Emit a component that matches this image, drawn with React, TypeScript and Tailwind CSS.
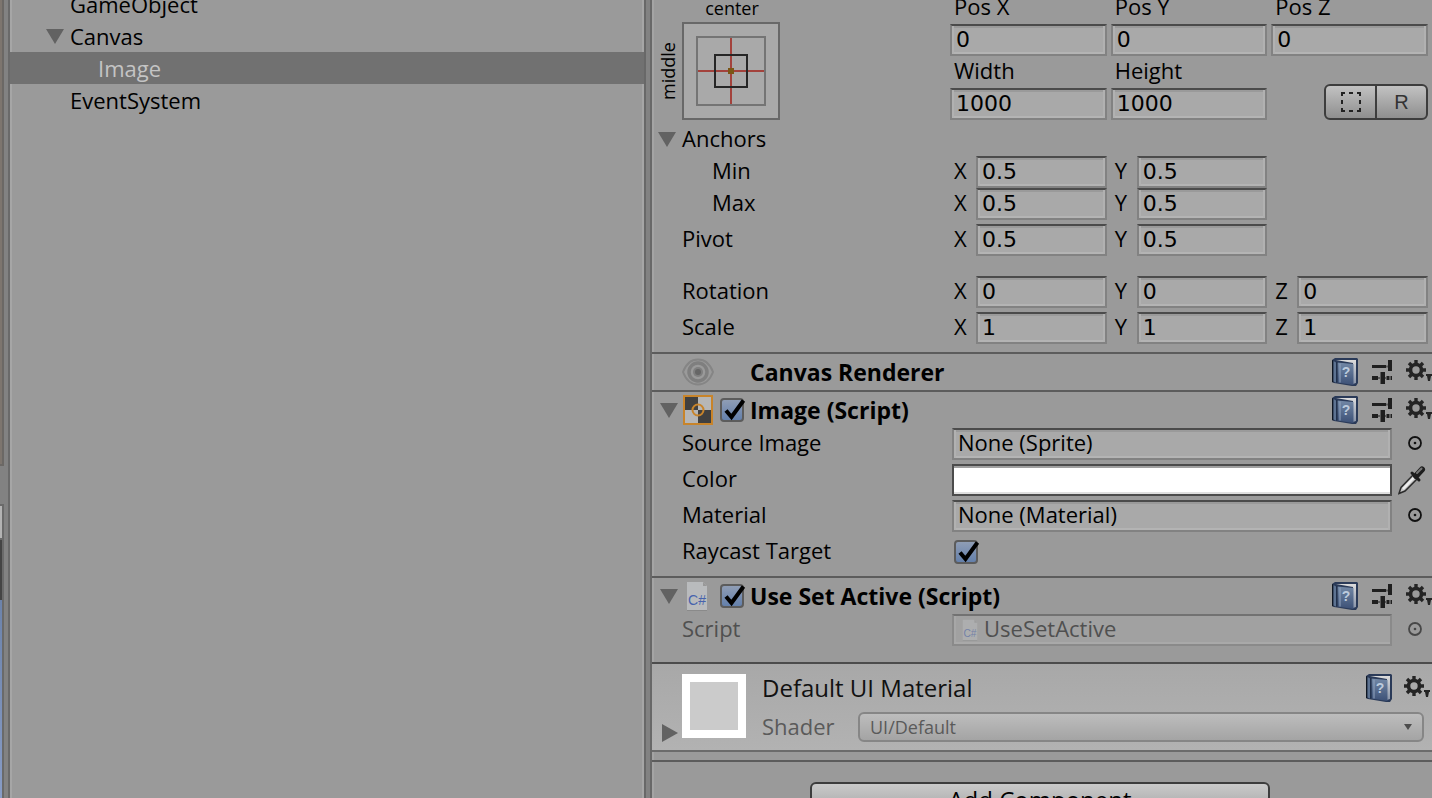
import React, { useState } from 'react';

const fieldStyle =
  'border-2 border-[#828282] border-t-[#4b4b4b] bg-[#a9a9a9] shadow-[inset_2px_0_0_#b1b1b1,inset_-2px_0_0_#b1b1b1,inset_0_2px_0_#9a9a9a,inset_0_-2px_0_#b4b4b4]';

const hierarchy = [
  { name: 'Canvas', depth: 0, open: true },
  { name: 'Image', depth: 1, selected: true },
  { name: 'EventSystem', depth: 0 },
];

const Foldout: React.FC<{ label: string; open?: boolean }> = ({ label, open = true }) => (
  <button type="button" aria-label={label} aria-expanded={open} className="block">
    <svg width="18" height="18" viewBox="0 0 18 18" fill="#626262">
      {open ? <path d="M0 2h18L9 17z" /> : <path d="M2 0v18l16-9z" />}
    </svg>
  </button>
);

const BookIcon: React.FC = () => (
  <svg width="26" height="28" viewBox="0 0 26 28">
    <defs>
      <linearGradient id="cover" x1="0" y1="0" x2="0" y2="1">
        <stop offset="0" stopColor="#7288a6" />
        <stop offset="1" stopColor="#3c5076" />
      </linearGradient>
      <linearGradient id="pages" x1="0" y1="0" x2="0" y2="1">
        <stop offset="0" stopColor="#dcdcdc" />
        <stop offset="1" stopColor="#8793a8" />
      </linearGradient>
    </defs>
    <path d="M0 2L3 0h22l1 1v24l-2 3h-4L2 25 0 24z" fill="#2a3a58" />
    <path d="M4 2h20v23l-3 1V5z" fill="url(#pages)" />
    <path d="M0 2l1.500 1v21.500L0 24z" fill="#0e1622" />
    <path d="M1.500 3L4 4.500v20l-2.500-1z" fill="#5d7392" />
    <path d="M5 4.500l16.500 1.500V27L5 24.500z" fill="url(#cover)" />
    <path d="M8 5.500V24.500" stroke="#93a6c0" strokeWidth="1" />
    <path d="M5 4V24.500" stroke="#1f2c45" strokeWidth="1.200" />
    <text x="14" y="19" textAnchor="middle" fontSize="14" fontWeight="bold" fontFamily="Liberation Sans, sans-serif" fill="#bccbdd">
      ?
    </text>
  </svg>
);

const PresetIcon: React.FC = () => (
  <svg width="20" height="28" viewBox="0 0 20 28" fill="#1f1f1f">
    <path d="M0 7h14v3H0zM16 2h4v11h-4zM0 18h6v4H0zM8.500 14H13v12H8.500zM14.500 18h3v4h-3zM18.500 18H20v4h-1.500z" />
    <path d="M14 7.500h2v2h-2zM6 19h2.500v2H6zM13 19h1.500v2H13z" fill="#5b5b5b" />
  </svg>
);

const GearIcon: React.FC = () => (
  <svg width="26" height="28" viewBox="0 0 26 28">
    <g stroke="#242424" fill="none">
      <circle cx="10" cy="12" r="5.500" strokeWidth="3.600" />
      <path
        d="M10 2v4M10 18v4M0 12h4M16 12h4M3 5l3 3M14 16l3 3M17 5l-3 3M6 16l-3 3"
        strokeWidth="3.400"
      />
    </g>
    <path d="M20 16h6v2h-1l-1 5h-2l-1-5h-1z" fill="#242424" />
  </svg>
);

const EyeIcon: React.FC = () => (
  <svg width="32" height="28" viewBox="0 0 32 28" fill="none">
    <path d="M1 14C4 6 9 1.500 16 1.500S28 6 31 14C28 22 23 26.500 16 26.500S4 22 1 14z" stroke="#858585" strokeWidth="2" />
    <circle cx="16" cy="14" r="9" stroke="#7f7f7f" strokeWidth="3.500" />
    <circle cx="16" cy="14" r="5" fill="#7f7f7f" />
    <circle cx="16" cy="14" r="3" fill="#666" />
  </svg>
);

const ImageIcon: React.FC = () => (
  <svg width="32" height="32" viewBox="0 0 32 32">
    <rect x="2" y="2" width="28" height="28" fill="#b6b6b6" />
    <path d="M3 3h13v13H3zM16 16h13v13H16z" fill="#404040" />
    <rect x="2" y="2" width="28" height="28" fill="none" stroke="#c8842a" strokeWidth="2" />
    <circle cx="16" cy="16" r="5.500" fill="none" stroke="#c8842a" strokeWidth="2" />
  </svg>
);

const ScriptIcon: React.FC<{ className?: string }> = ({ className }) => (
  <svg viewBox="0 0 22 30" className={className}>
    <path d="M1 1h16l4 4v24H1z" fill="#b9bbbd" />
    <path d="M1 29.500h20" stroke="#8a8a8a" />
    <path d="M17 1v4h4z" fill="#989898" />
    <text x="11" y="24" textAnchor="middle" fontSize="14" fontFamily="Liberation Sans, sans-serif" fill="#4763ad">
      C#
    </text>
  </svg>
);

const DropperIcon: React.FC = () => (
  <svg width="28" height="30" viewBox="0 0 28 30">
    <path d="M1 28.500l2-6L15 10l4 4L7 26z" fill="#c6c6c6" stroke="#2b2b2b" strokeWidth="1.500" />
    <path d="M5 24L16 12.500" stroke="#efefef" strokeWidth="2" />
    <path d="M14 8l7 7" stroke="#1d1d1d" strokeWidth="3" strokeLinecap="round" />
    <path d="M18 11l6-6.500" stroke="#1d1d1d" strokeWidth="6" strokeLinecap="round" />
    <path d="M19 8l4.500-4.500" stroke="#777" strokeWidth="2" strokeLinecap="round" />
  </svg>
);

const PickerButton: React.FC<{ label: string; disabled?: boolean }> = ({ label, disabled }) => (
  <button type="button" aria-label={label} disabled={disabled} className="flex h-[30px] items-center justify-end pr-2.5 disabled:opacity-60">
    <svg width="14" height="14" viewBox="0 0 14 14">
      <circle cx="7" cy="7" r="6" fill="none" stroke="#111" strokeWidth="1.800" />
      <circle cx="7" cy="7" r="1.300" fill="#111" />
    </svg>
  </button>
);

const Checkbox: React.FC<{ id?: string; label?: string }> = ({ id, label }) => (
  <span className="relative block size-6">
    <input
      id={id}
      type="checkbox"
      defaultChecked
      aria-label={label}
      className="peer block size-6 appearance-none rounded border-2 border-[#5c5c5c] bg-linear-to-b from-[#8f9db5] to-[#6480ab]"
    />
    <svg viewBox="0 0 26 24" className="pointer-events-none absolute top-0 left-0 hidden h-6 w-[26px] peer-checked:block">
      <path d="M6 12.500l5.500 6.500L23.500 2.500" fill="none" stroke="#000" strokeWidth="4" />
    </svg>
  </span>
);

const ComponentHeader: React.FC<{
  title: string;
  icon: React.ReactNode;
  toggle?: boolean;
}> = ({ title, icon, toggle = true }) => (
  <header className="flex h-9 items-center pl-2">
    <div className="w-[22px]">{toggle && <Foldout label={`Toggle ${title}`} />}</div>
    <div className="w-[38px]">{icon}</div>
    <div className="w-[30px]">{toggle && <Checkbox label={`Enable ${title}`} />}</div>
    <h2 className="flex-1 text-[23px] leading-7 font-bold">{title}</h2>
    <div className="flex gap-3.5">
      <button type="button" aria-label="Open reference"><BookIcon /></button>
      <button type="button" aria-label="Presets"><PresetIcon /></button>
      <button type="button" aria-label="Component menu"><GearIcon /></button>
    </div>
  </header>
);

const TextField: React.FC<{ id: string; value: string }> = ({ id, value }) => {
  const [text, setText] = useState(value);
  return (
    <input
      id={id}
      type="text"
      value={text}
      onChange={e => setText(e.target.value)}
      className={`block h-8 w-full min-w-0 rounded-none pb-0.5 pl-1 font-['DejaVu_Sans',sans-serif] outline-none ${fieldStyle}`}
    />
  );
};

const StackedField: React.FC<{ label: string; value: string; clipped?: boolean }> = ({ label, value, clipped }) => {
  const id = label.toLowerCase().replace(' ', '-');
  return (
    <div>
      <div className={`flex overflow-hidden pb-1 pl-1 ${clipped ? 'h-6 items-end' : 'h-8'}`}>
        <label htmlFor={id} className="leading-7">{label}</label>
      </div>
      <TextField id={id} value={value} />
    </div>
  );
};

const VectorRow: React.FC<{ label: string; values: string[]; indent?: boolean }> = ({ label, values, indent }) => (
  <div className="grid grid-cols-[298px_1fr] pr-1">
    <span className={`leading-7 ${indent ? 'pl-[60px]' : 'pl-[30px]'}`}>{label}</span>
    <div className="grid grid-cols-3 gap-1">
      {values.map((value, i) => {
        const axis = ['X', 'Y', 'Z'][i];
        const id = `${label.toLowerCase()}-${axis}`;
        return (
          <div key={axis} className="flex">
            <label htmlFor={id} className="w-[26px] shrink-0 pl-1 leading-7">{axis}</label>
            <TextField id={id} value={value} />
          </div>
        );
      })}
    </div>
  </div>
);

const PropertyRow: React.FC<{
  label: string;
  htmlFor: string;
  disabled?: boolean;
  children: React.ReactNode;
}> = ({ label, htmlFor, disabled, children }) => (
  <div className="grid h-8 grid-cols-[300px_1fr_40px]">
    <label htmlFor={htmlFor} className={`pl-[30px] leading-7 ${disabled ? 'text-[#505050]' : ''}`}>{label}</label>
    {children}
  </div>
);

const AnchorPreview: React.FC = () => (
  <svg width="98" height="98" viewBox="0 0 98 98" fill="none" strokeWidth="2">
    <rect x="1" y="1" width="96" height="96" fill="#a9a9a9" stroke="#686868" />
    <rect x="15" y="15" width="68" height="68" stroke="#747474" />
    <path d="M49 16v66M16 49h66" stroke="#a3423c" />
    <rect x="33" y="33" width="32" height="32" stroke="#262626" />
    <rect x="46" y="46" width="6" height="6" fill="#7a5616" />
  </svg>
);

const SceneEdge: React.FC = () => (
  <div className="flex border-r-2 border-[#6a6a6a] bg-[#828282]">
    <div className="flex w-1 flex-col">
      <div className="h-[466px] border-r-2 border-b-2 border-[#6b6865] bg-[#7d756e]" />
      <div className="h-[38px]" />
      <div className="h-9 border-y-2 border-r-2 border-[#6a6a6a] bg-[#b3b3b3]" />
      <div className="h-[60px] border-r-2 border-[#6a6a6a] bg-[#444]" />
      <div className="flex-1 border-r-2 border-[#6a6a6a] bg-linear-to-b from-[#6c83ab] to-[#8b9fc9]" />
    </div>
  </div>
);

const HierarchyPanel: React.FC = () => (
  <nav aria-label="Hierarchy" className="shadow-[inset_2px_0_0_#a6a6a6,inset_-2px_0_0_#a6a6a6]">
    <ul>
      <li className="flex h-5 items-end overflow-hidden pl-[60px] leading-8">GameObject</li>
      {hierarchy.map(item => (
        <li
          key={item.name}
          className={`flex h-8 items-center leading-8 ${item.selected ? 'bg-[#717171] text-[#c4c4c4]' : ''}`}
        >
          <div className={`flex shrink-0 justify-end pr-1.5 ${item.depth ? 'w-[88px]' : 'w-[60px]'}`}>
            {item.open && <Foldout label={`Toggle ${item.name}`} />}
          </div>
          {item.name}
        </li>
      ))}
    </ul>
  </nav>
);

const RectTransformSection: React.FC = () => (
  <section className="pb-2">
    <div className="grid grid-cols-[298px_1fr] pr-1">
      <div className="text-lg">
        <div className="h-[22px] w-[130px] pl-[30px] text-center leading-4">center</div>
        <div className="flex">
          <span className="w-[30px] rotate-180 pr-0.5 text-center leading-7 [writing-mode:vertical-rl]">middle</span>
          <button type="button" aria-label="Anchor presets" className="block"><AnchorPreview /></button>
        </div>
      </div>
      <div className="grid grid-cols-3 content-start gap-x-1">
        <StackedField label="Pos X" value="0" clipped />
        <StackedField label="Pos Y" value="0" clipped />
        <StackedField label="Pos Z" value="0" clipped />
        <StackedField label="Width" value="1000" />
        <StackedField label="Height" value="1000" />
        <div className="flex items-end justify-end">
          <div className="flex h-9 w-[104px] overflow-hidden rounded-md border-2 border-[#3d3d3d] bg-linear-to-b from-[#c2c2c2] to-[#8f8f8f]">
            <button type="button" aria-label="Blueprint mode" className="flex flex-1 items-center justify-center border-r-2 border-[#3d3d3d]">
              <svg width="20" height="20" viewBox="0 0 20 20" fill="none" stroke="#222" strokeWidth="2">
                <path d="M0 1h4M8 1h4M16 1h4M0 19h4M8 19h4M16 19h4M1 0v4M1 8v4M1 16v4M19 0v4M19 8v4M19 16v4" />
              </svg>
            </button>
            <button type="button" aria-label="Raw edit mode" className="flex-1 font-['Liberation_Sans',sans-serif] text-xl text-[#333]">
              R
            </button>
          </div>
        </div>
      </div>
    </div>
    <div className="mt-1 flex h-8 pl-1.5 leading-7">
      <div className="w-6 pt-1.5"><Foldout label="Toggle Anchors" /></div>
      Anchors
    </div>
    <VectorRow label="Min" values={['0.5', '0.5']} indent />
    <VectorRow label="Max" values={['0.5', '0.5']} indent />
    <div className="mt-1 mb-5">
      <VectorRow label="Pivot" values={['0.5', '0.5']} />
    </div>
    <div className="flex flex-col gap-1">
      <VectorRow label="Rotation" values={['0', '0', '0']} />
      <VectorRow label="Scale" values={['1', '1', '1']} />
    </div>
  </section>
);

const ImageSection: React.FC = () => (
  <section className="border-t-2 border-[#5c5c5c] pb-2">
    <ComponentHeader title="Image (Script)" icon={<ImageIcon />} />
    <div className="flex flex-col gap-1">
      <PropertyRow label="Source Image" htmlFor="source-image">
        <button id="source-image" type="button" className={`pb-1 pl-1 text-left leading-6 ${fieldStyle}`}>None (Sprite)</button>
        <PickerButton label="Select sprite" />
      </PropertyRow>
      <PropertyRow label="Color" htmlFor="color">
        <input
          id="color"
          type="color"
          defaultValue="#ffffff"
          className="block h-8 w-full appearance-none border-2 border-[#4b4b4b] bg-white p-0 [&::-webkit-color-swatch]:rounded-none [&::-webkit-color-swatch]:border-0 [&::-webkit-color-swatch]:border-y-2 [&::-webkit-color-swatch]:border-t-[#a0a0a0] [&::-webkit-color-swatch]:border-b-[#dedede] [&::-webkit-color-swatch-wrapper]:p-0"
        />
        <button type="button" aria-label="Pick color" className="flex items-center justify-end pr-1.5"><DropperIcon /></button>
      </PropertyRow>
      <PropertyRow label="Material" htmlFor="material">
        <button id="material" type="button" className={`pb-1 pl-1 text-left leading-6 ${fieldStyle}`}>None (Material)</button>
        <PickerButton label="Select material" />
      </PropertyRow>
      <PropertyRow label="Raycast Target" htmlFor="raycast">
        <div className="py-1 pl-0.5"><Checkbox id="raycast" /></div>
      </PropertyRow>
    </div>
  </section>
);

const ScriptSection: React.FC = () => (
  <section className="border-t-2 border-[#5c5c5c] pb-4">
    <ComponentHeader title="Use Set Active (Script)" icon={<ScriptIcon className="ml-1 h-[30px] w-[22px]" />} />
    <PropertyRow label="Script" htmlFor="script" disabled>
      <button
        id="script"
        type="button"
        disabled
        className="flex items-start gap-1.5 border-2 border-[#8a8a8a] border-t-[#727272] bg-[#a1a1a1] pl-2 leading-6 text-[#505050] shadow-[inset_0_-2px_0_#a9a9a9,inset_2px_0_0_#a7a7a7]"
      >
        <ScriptIcon className="mt-0.5 h-6 w-4 opacity-50" />
        UseSetActive
      </button>
      <PickerButton label="Select script" disabled />
    </PropertyRow>
  </section>
);

const MaterialSection: React.FC = () => (
  <section className="flex h-[90px] border-t-2 border-b-2 border-t-[#4c4c4c] border-b-[#6b6b6b] bg-linear-to-b from-[#a8a8a8] to-[#b2b2b2] pl-2">
    <div className="w-[22px] self-end pb-2"><Foldout label="Toggle Default UI Material" open={false} /></div>
    <div className="mt-2.5 size-16 border-8 border-white bg-[#cbcbcb]" />
    <div className="ml-4 flex-1">
      <div className="flex h-12">
        <h2 className="flex-1 pt-2 text-2xl leading-8 text-[#111]">Default UI Material</h2>
        <div className="flex items-start gap-3 pt-2.5 pr-0.5">
          <button type="button" aria-label="Open reference"><BookIcon /></button>
          <button type="button" aria-label="Material menu"><GearIcon /></button>
        </div>
      </div>
      <div className="flex pr-2 text-[#5a5a5a]">
        <label htmlFor="shader" className="w-24 leading-7">Shader</label>
        <div className="relative flex-1">
          <select
            id="shader"
            disabled
            className="block h-[30px] w-full appearance-none rounded-md border-2 border-[#868686] bg-linear-to-b from-[#bdbdbd] to-[#a4a4a4] pl-2.5 text-lg leading-6 disabled:opacity-100"
          >
            <option>UI/Default</option>
          </select>
          <svg width="8" height="6" viewBox="0 0 8 6" className="pointer-events-none absolute top-3 right-3" fill="#4c4c4c">
            <path d="M0 0h8L4 6z" />
          </svg>
        </div>
      </div>
    </div>
  </section>
);

const App: React.FC = () => (
  <div className="grid h-screen grid-cols-[10px_634fr_8px_780fr] overflow-hidden bg-[#9a9a9a] font-['Open_Sans',sans-serif] text-[22px] text-black">
    <SceneEdge />
    <HierarchyPanel />
    <div className="border-x-2 border-[#686868] bg-[#828282]" />
    <main className="min-w-0 shadow-[inset_2px_0_0_#a4a4a4]">
      <RectTransformSection />
      <section className="border-t-2 border-[#5c5c5c]">
        <ComponentHeader title="Canvas Renderer" icon={<EyeIcon />} toggle={false} />
      </section>
      <ImageSection />
      <ScriptSection />
      <MaterialSection />
      <footer className="mt-2 flex justify-center border-t-2 border-[#5c5c5c] pt-5 pr-1">
        <button
          type="button"
          className="h-10 w-[460px] rounded-md border-2 border-[#3d3d3d] bg-linear-to-b from-[#cacaca] to-[#9c9c9c] pb-1 text-2xl leading-8"
        >
          Add Component
        </button>
      </footer>
    </main>
  </div>
);

export default App;
